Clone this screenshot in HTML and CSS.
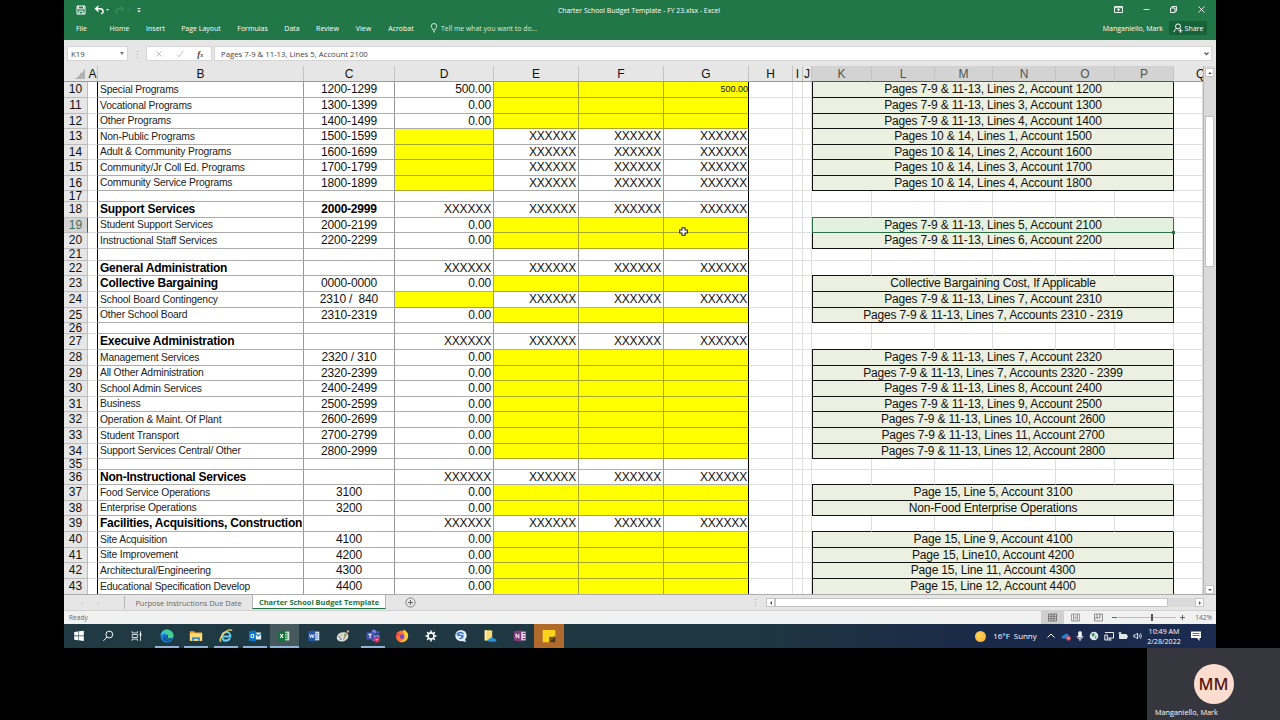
FILE: index.html
```
<!DOCTYPE html>
<html lang="en">
<head>
    <meta charset="UTF-8">
    <title>Charter School Budget Template - FY 23.xlsx - Excel</title>
    <link rel="stylesheet" href="styles.css">
</head>
<body>
    <div class="desktop">
        <header class="ribbon">
            <div class="title-bar">
                <div class="quick-access">
                    <svg width="10" height="10" viewBox="0 0 10 10"><path d="M1 1h8v8H1zM2.5 1v3h5V1M3 9V6.2h4V9" fill="none" stroke="#fff" stroke-width="1"/></svg>
                    <svg width="16" height="10" viewBox="0 0 16 10"><path d="M4.5 1L1.5 3.8l3 2.8M1.5 3.8H6c4 0 4 4.6 1 4.8" fill="none" stroke="#fff" stroke-width="1.4"/><path d="M12 4h3l-1.5 1.8z" fill="#fff"/></svg>
                    <svg class="faded" width="16" height="10" viewBox="0 0 16 10"><path d="M5.500 1l3 2.800-3 2.800M8.500 3.800H4c-4 0-4 4.600-1 4.800" fill="none" stroke="#6fae88" stroke-width="1.200"/><path d="M12 4h3l-1.500 1.800z" fill="#6fae88"/></svg>
                    <svg width="6" height="8" viewBox="0 0 6 8"><path d="M1.500 2.500h3" stroke="#fff" stroke-width="0.800"/><path d="M1.200 4.500h3.600L3 6.500z" fill="#fff"/></svg>
                </div>
                <div class="window-title">Charter School Budget Template - FY 23.xlsx - Excel</div>
                <div class="window-buttons">
                    <svg width="9" height="9" viewBox="0 0 9 9"><path d="M.5 1.500h8v6h-8zM.5 2.700h8M4.500 6.500V4M3 5l1.500-1.300L6 5" fill="none" stroke="#fff" stroke-width="0.900"/></svg>
                    <svg width="9" height="9" viewBox="0 0 9 9"><path d="M1.500 4.500h6" stroke="#fff" stroke-width="0.800"/></svg>
                    <svg width="9" height="9" viewBox="0 0 9 9"><path d="M1.500 3h4.500v4.500H1.500zM3 3V1.500h4.500V6H6" fill="none" stroke="#fff" stroke-width="0.900"/></svg>
                    <svg width="9" height="9" viewBox="0 0 9 9"><path d="M1.500 1.500l6 6M7.500 1.500l-6 6" stroke="#fff" stroke-width="0.900"/></svg>
                </div>
            </div>
            <nav class="menu">
                <span class="m-file">File</span>
                <span class="m-home">Home</span>
                <span class="m-insert">Insert</span>
                <span class="m-layout">Page Layout</span>
                <span class="m-formulas">Formulas</span>
                <span class="m-data">Data</span>
                <span class="m-review">Review</span>
                <span class="m-view">View</span>
                <span class="m-acrobat">Acrobat</span>
                <svg width="8" height="10" viewBox="0 0 8 10"><path d="M3 7C3 5.500 1.300 5 1.300 3.200a2.700 2.700 0 0 1 5.400 0C6.700 5 5 5.500 5 7zM3 8.800h2" fill="none" stroke="#e6f2ea" stroke-width="0.900"/></svg>
                <span class="m-tell">Tell me what you want to do...</span>
                <span class="m-user">Manganiello, Mark</span>
                <span class="share">
                    <svg width="10" height="10" viewBox="0 0 10 10"><circle cx="5" cy="3.400" r="2.500" fill="none" stroke="#fff"/><path d="M1 9c.3-2 1.500-3.200 3-3.500M5.500 7.700h4M7.500 5.700v4" fill="none" stroke="#fff"/></svg>
                    Share
                </span>
            </nav>
        </header>

        <div class="formula-bar">
            <div class="name-box"><span>K19</span><i class="caret"></i></div>
            <div class="dots"><i></i><i></i><i></i></div>
            <div class="formula-buttons">
                <svg width="8" height="8" viewBox="0 0 8 8"><path d="M1.500 1.500l5 5M6.500 1.500l-5 5" stroke="#c0c0c0"/></svg>
                <svg width="8" height="8" viewBox="0 0 8 8"><path d="M.8 4.500L3 6.800 7.200 1" fill="none" stroke="#c0c0c0"/></svg>
                <span class="fx">f<small>x</small></span>
            </div>
            <div class="formula-text"><span>Pages 7-9 &amp; 11-13, Lines 5, Account 2100</span><svg width="7" height="6" viewBox="0 0 7 6"><path d="M1.500 1.500l2 2.200 2-2.200" fill="none" stroke="#555" stroke-width="1.200"/></svg></div>
        </div>

        <div class="workbook">
            <div class="sheet" id="sheet">
                <div class="row column-heads">
                    <b class="corner"></b><b>A</b><b>B</b><b>C</b><b>D</b><b>E</b><b>F</b><b>G</b><b>H</b><b>I</b><b>J</b><b class="on">K</b><b class="on">L</b><b class="on">M</b><b class="on">N</b><b class="on">O</b><b class="on">P</b><b class="cut"><span>Q</span></b>
                </div>
            </div>
            <div class="v-scroll">
                <div class="arrow up"></div>
                <div class="v-track"><div class="v-thumb"></div></div>
                <div class="arrow down"></div>
            </div>
            <svg class="cursor" width="9" height="9" viewBox="0 0 9 9"><path d="M3 .7h3V3h2.300v3H6v2.300H3V6H.7V3H3z" fill="#fff" stroke="#222" stroke-width="1.100"/></svg>
        </div>

        <div class="tab-bar">
            <div class="tab-nav"><span>&#8249;</span><span>&#8250;</span></div>
            <div class="tab">Purpose Instructions Due Date</div>
            <div class="tab active">Charter School Budget Template</div>
            <svg class="add" width="11" height="11" viewBox="0 0 11 11"><circle cx="5.500" cy="5.500" r="4.600" fill="none" stroke="#777" stroke-width="0.900"/><path d="M3 5.500h5M5.500 3v5" stroke="#666"/></svg>
            <div class="dots"><i></i><i></i><i></i></div>
            <div class="h-scroll">
                <div class="arrow left"></div>
                <div class="h-thumb"></div>
                <div class="arrow right"></div>
            </div>
        </div>

        <div class="status-bar">
            <span class="ready">Ready</span>
            <div class="views">
                <span class="view on"><svg width="9" height="9" viewBox="0 0 9 9"><path d="M.5 1h8v7h-8zM.5 3.300h8M.5 5.700h8M3.200 1v7M5.800 1v7" fill="none" stroke="#666" stroke-width="0.800"/></svg></span>
                <span class="view"><svg width="9" height="9" viewBox="0 0 9 9"><path d="M.5 1h8v7h-8zM2.500 1v7M6.500 1v7M3.500 3h2M3.500 4.500h2M3.500 6h2" fill="none" stroke="#888" stroke-width="0.800"/></svg></span>
                <span class="view"><svg width="9" height="9" viewBox="0 0 9 9"><path d="M.5 1h8v7h-8zM3 1v4M6 1v4M.5 5H6" fill="none" stroke="#777" stroke-width="0.800"/></svg></span>
            </div>
            <span class="zoom-sign minus"></span>
            <div class="slider"><i></i></div>
            <span class="zoom-sign plus"></span>
            <span class="percent">142%</span>
        </div>

        <div class="taskbar">
            <div class="apps">
                <span><svg viewBox="0 0 16 16"><path d="M2.500 3.500l4.600-.7v4.700H2.500zM7.700 2.700L13.500 2v5.500H7.700zM2.500 8.200h4.600v4.700l-4.600-.7zM7.700 8.200h5.800v5.500l-5.800-.8z" fill="#fff"/></svg></span>
                <span><svg viewBox="0 0 16 16"><circle cx="9.500" cy="6.300" r="3.900" fill="none" stroke="#fff" stroke-width="1.100"/><path d="M6.800 9.200L2.800 13.500" stroke="#fff" stroke-width="1.100"/></svg></span>
                <span><svg viewBox="0 0 16 16"><path d="M2.500 2.500v2h6v-2M2.500 13.500v-2h6v2M2.500 6.300h6v3.400h-6zM12 2.500v11" fill="none" stroke="#e8eef0"/><path d="M11 5h2v2.500h-2z" fill="#fff"/></svg></span>
                <span class="open"><svg viewBox="0 0 16 16"><circle cx="8" cy="8" r="7.500" fill="#1681d2"/><path d="M.7 7C1.500 2.500 5 .5 8.200.5 12 .5 15.500 4 15.500 7.500c0 2-2 3.500-4.500 3.500-1.500 0-2.500-.5-2.200-1.500C10 7.500 8 5.300 5.500 5.300 3.600 5.300 2 6 .7 7z" fill="#45cf8e"/><path d="M.7 7C2 2.500 6 1 9.500 3 6 2.800 5 5.300 5.500 5.300 3.600 5.300 2 6 .7 7z" fill="#35bce5"/><path d="M6.500 7.500c-1.500 3 1 6 5.500 5.300-2.500 2.500-7.500 1.300-8-2C3.700 9 5 7.700 6.500 7.500z" fill="#0c4f9c"/><path d="M8 7.200c2 0 1 1.500.8 2.500.2 1.500 3.700 1.800 5.700 0l-2 2.500C9 12.600 6.500 10 8 7.200z" fill="#203a43"/></svg></span>
                <span class="open"><svg viewBox="0 0 16 16"><path d="M1 2.500h5l1 1.500h8v9.500H1z" fill="#e9ab35"/><path d="M1 5h14v8.500H1z" fill="#ffdb78"/><path d="M3.500 13.500V9.500h9v4h-2.200v-2H5.700v2z" fill="#3b8bd0"/></svg></span>
                <span class="open"><svg viewBox="0 0 16 16"><path d="M12.500 10.500c-.8 1.800-2.300 2.800-4.200 2.800-2.800 0-4.800-2-4.800-4.800s2-5 4.800-5c3 0 4.700 2.200 4.700 5H4.500" fill="none" stroke="#66cdf3" stroke-width="2.400"/><path d="M2.500 14.500C-1 14 3 6.500 8 3c3-2 6.500-2.800 6.500-.8" fill="none" stroke="#f6d04c" stroke-width="1.500"/></svg></span>
                <span class="open"><svg viewBox="0 0 16 16"><path d="M8 4h7v8H8z" fill="#e9f3fb"/><path d="M8.500 5l3.200 3L15 5" fill="none" stroke="#1673c2" stroke-width="1.200"/><path d="M1 2.500L9 1.500v13l-8-1z" fill="#0b70c6"/><ellipse cx="5" cy="8" rx="1.700" ry="2" fill="none" stroke="#fff" stroke-width="1.200"/></svg></span>
                <span class="open current"><svg viewBox="0 0 16 16"><path d="M8 3h6v10H8z" fill="#e7f4ea"/><path d="M9 5h4M9 7h4M9 9h4M9 11h4M11 4v8" stroke="#2a8a50" stroke-width="0.800"/><path d="M1.500 2.500l8-1v13l-8-1z" fill="#18713b"/><path d="M3.700 5.700l3.300 4.600M7 5.700l-3.300 4.600" stroke="#fff" stroke-width="1.200"/></svg></span>
                <span><svg viewBox="0 0 16 16"><path d="M8 3h6v10H8z" fill="#eaf1fa"/><path d="M10 5h3M10 7h3M10 9h3M10 11h3" stroke="#3468ad" stroke-width="0.800"/><path d="M1.500 2.500l8-1v13l-8-1z" fill="#2858a5"/><path d="M3 6l1.100 4L5.500 6.500 6.900 10 8 6" fill="none" stroke="#fff"/></svg></span>
                <span><svg viewBox="0 0 16 16"><ellipse cx="7.500" cy="9" rx="6.800" ry="5.200" fill="#d9dcd8" transform="rotate(-20 7.500 9)"/><circle cx="4" cy="9" r="1" fill="#d55b48"/><circle cx="6.500" cy="6.700" r="1" fill="#dcb53c"/><circle cx="10" cy="6.800" r="1" fill="#4b9c57"/><circle cx="5.500" cy="11.500" r="1" fill="#477fb7"/><path d="M8.500 12l5-9" stroke="#b08859" stroke-width="1.200"/><circle cx="13.800" cy="2.800" r="1.300" fill="#e7a792"/></svg></span>
                <span class="open"><svg viewBox="0 0 16 16"><circle cx="9" cy="3" r="2.500" fill="#7b83eb"/><circle cx="13.500" cy="4" r="1.700" fill="#5059c9"/><path d="M6 6.500h9.500v4c0 5-8.500 5-9.500 1z" fill="#6d76db"/><path d="M.5 3.700h8.500v8.500H.5z" fill="#444fb3"/><path d="M2.700 6h4M4.700 6v4.500" stroke="#fff" stroke-width="1.200"/><circle cx="12.500" cy="12.300" r="3.200" fill="#cf2c57"/><path d="M11 12.300h3" stroke="#fff"/></svg></span>
                <span><svg viewBox="0 0 16 16"><circle cx="8" cy="8.500" r="6.800" fill="#ff7530"/><path d="M10 .5c4.500 2.500 6.500 6.500 4 10.500-1.500 2.500-5.500 4.500-9 3 4 0 6.500-2.500 6-5.500C10.500 6 9 4 10 .5z" fill="#ffcc3d"/><path d="M2.300 3.500l1.500 2L6 4.500l-1 2.700L1.500 9c-.5-2 .3-4 .8-5.500z" fill="#f93f5c"/><circle cx="8" cy="8.700" r="2.600" fill="#7645ce"/></svg></span>
                <span><svg viewBox="0 0 16 16"><circle cx="8" cy="8" r="3.500" fill="none" stroke="#fff" stroke-width="1.900"/><path d="M8 1.800v2.500M8 11.700v2.500M1.800 8h2.500M11.700 8h2.500M3.600 3.600l1.800 1.800M10.600 10.600l1.800 1.800M12.400 3.600l-1.800 1.800M5.400 10.600l-1.800 1.800" stroke="#fff" stroke-width="1.700"/></svg></span>
                <span><svg viewBox="0 0 16 16"><circle cx="8" cy="7.500" r="6.500" fill="#e3efff"/><path d="M6 13l6-1.500 2 3.300z" fill="#e3efff"/><path d="M3 6.500c2-3 6-3.500 8-.5M4 8c2-2 5-1 5 1M6 10.500c3 1 5-1 4-3.500" fill="none" stroke="#356eb8" stroke-width="1.500"/></svg></span>
                <span><svg viewBox="0 0 16 16"><path d="M2 1.500h7.500l1 1V13H2z" fill="#f5da75"/><path d="M2 1.500h2V13H2z" fill="#fff0ae"/><path d="M7.500 14.500c-2.500 0-2-3.500.4-3.200.6-2.700 4.200-2.400 4.600 0 3.500-.3 3.500 3.200 1.300 3.200z" fill="#2491d9"/></svg></span>
                <span><svg viewBox="0 0 16 16"><path d="M8 3h6.500v10H8z" fill="#efe2f1"/><path d="M11 5h3.500M11 8h3.500M11 11h3.500" stroke="#80397b" stroke-width="1.200"/><path d="M1 2.500l8.500-1v13L1 13.500z" fill="#80397b"/><path d="M3.500 10.500v-5l3.200 5v-5" fill="none" stroke="#fff" stroke-width="1.100"/></svg></span>
                <span class="sticky"><svg viewBox="0 0 16 16"><path d="M.8 1h14.400v8L10 15H.8z" fill="#ffd21f"/><path d="M15.200 8.500V15H8.500V9z" fill="#4b3621"/><path d="M8.500 9h6.200L8.500 15z" fill="#7a5a1c"/></svg></span>
            </div>
            <div class="tray">
                <i class="sun"></i>
                <span class="weather">16°F&nbsp; Sunny</span>
                <svg viewBox="0 0 10 10"><path d="M1.500 6.500L5 3l3.500 3.500" fill="none" stroke="#fff"/></svg>
                <svg viewBox="0 0 10 10"><path d="M1.500 7.500C-.5 6 1.500 4 3 4.500 4 2 7.500 2 8 5v2.500z" fill="#2585d5"/><circle cx="7.500" cy="7.300" r="2.400" fill="#dc3d4c"/><path d="M6.500 6.300l2 2M8.500 6.300l-2 2" stroke="#fff" stroke-width="0.700"/></svg>
                <svg viewBox="0 0 10 10"><rect x="3.200" y=".2" width="3.600" height="6.500" rx="1.500" fill="#fff"/><path d="M2 5c.5 4 5.500 4 6 0M5 8v2" fill="none" stroke="#fff" stroke-width="0.900"/></svg>
                <svg viewBox="0 0 10 10"><circle cx="5" cy="5" r="4.300" fill="#dce7e9"/><path d="M2 3l3-1 1 2-2 2zM6 5l2 1-2 2z" fill="#43966b"/></svg>
                <svg viewBox="0 0 10 10"><path d="M1 1.500h8.500V7H4M3.500 9h4M6 7v2M.8 4h2.500v5H.8z" fill="none" stroke="#fff" stroke-width="0.900"/></svg>
                <svg viewBox="0 0 10 10"><path d="M1.500 3.500h7v4h-7z" fill="#dce6ef" stroke="#fff" stroke-width="0.800"/><path d="M9.300 4.500v2M.5 2h3M2 1v3" stroke="#fff" stroke-width="0.900"/></svg>
                <svg viewBox="0 0 10 10"><path d="M.8 4h1.700l2-2v6l-2-2H.8zM6 3.500q1 1.500 0 3M7.500 2.300q1.800 2.700 0 5.400" fill="none" stroke="#fff" stroke-width="0.800"/></svg>
                <div class="clock">10:49 AM<br>2/28/2022</div>
                <svg class="notice" viewBox="0 0 10 10"><path d="M0 .5h10V7H8.500v3L6 7H0z" fill="#fff"/><path d="M1.500 2.500h7M1.500 4.500h7" stroke="#3c4b65" stroke-width="0.800"/></svg>
            </div>
        </div>
    </div>

    <div class="participant">
        <div class="avatar">MM</div>
        <div class="participant-name">Manganiello, Mark</div>
    </div>

    <script>
        // [row, height, label, code, D, E-G, reference, style]
        // y = yellow input cell, x = XXXXXX
        const rows = [
            [10, 16, 'Special Programs', '1200-1299', '500.00', 'y', 'Pages 7-9 & 11-13, Lines 2, Account 1200'],
            [11, 16, 'Vocational Programs', '1300-1399', '0.00', 'y', 'Pages 7-9 & 11-13, Lines 3, Account 1300'],
            [12, 15, 'Other Programs', '1400-1499', '0.00', 'y', 'Pages 7-9 & 11-13, Lines 4, Account 1400'],
            [13, 16, 'Non-Public Programs', '1500-1599', 'y', 'x', 'Pages 10 & 14, Lines 1, Account 1500'],
            [14, 15, 'Adult & Community Programs', '1600-1699', 'y', 'x', 'Pages 10 & 14, Lines 2, Account 1600'],
            [15, 16, 'Community/Jr Coll Ed. Programs', '1700-1799', 'y', 'x', 'Pages 10 & 14, Lines 3, Account 1700'],
            [16, 15, 'Community Service Programs', '1800-1899', 'y', 'x', 'Pages 10 & 14, Lines 4, Account 1800'],
            [17, 11, '', '', '', '', ''],
            [18, 16, 'Support Services', '2000-2999', 'x', 'x', '', 'bold'],
            [19, 15, 'Student Support Services', '2000-2199', '0.00', 'y', 'Pages 7-9 & 11-13, Lines 5, Account 2100', 'selected'],
            [20, 16, 'Instructional Staff Services', '2200-2299', '0.00', 'y', 'Pages 7-9 & 11-13, Lines 6, Account 2200'],
            [21, 12, '', '', '', '', ''],
            [22, 15, 'General Administration', '', 'x', 'x', '', 'bold'],
            [23, 16, 'Collective Bargaining', '0000-0000', '0.00', 'y', 'Collective Bargaining Cost, If Applicable', 'bold-label'],
            [24, 16, 'School Board Contingency', '2310 /  840', 'y', 'x', 'Pages 7-9 & 11-13, Lines 7, Account 2310'],
            [25, 15, 'Other School Board', '2310-2319', '0.00', 'y', 'Pages 7-9 & 11-13, Lines 7, Accounts 2310 - 2319'],
            [26, 11, '', '', '', '', ''],
            [27, 16, 'Execuive Administration', '', 'x', 'x', '', 'bold'],
            [28, 16, 'Management Services', '2320 / 310', '0.00', 'y', 'Pages 7-9 & 11-13, Lines 7, Account 2320'],
            [29, 15, 'All Other Administration', '2320-2399', '0.00', 'y', 'Pages 7-9 & 11-13, Lines 7, Accounts 2320 - 2399'],
            [30, 16, 'School Admin Services', '2400-2499', '0.00', 'y', 'Pages 7-9 & 11-13, Lines 8, Account 2400'],
            [31, 15, 'Business', '2500-2599', '0.00', 'y', 'Pages 7-9 & 11-13, Lines 9, Account 2500'],
            [32, 16, 'Operation & Maint. Of Plant', '2600-2699', '0.00', 'y', 'Pages 7-9 & 11-13, Lines 10, Account 2600'],
            [33, 16, 'Student Transport', '2700-2799', '0.00', 'y', 'Pages 7-9 & 11-13, Lines 11, Account 2700'],
            [34, 15, 'Support Services Central/ Other', '2800-2999', '0.00', 'y', 'Pages 7-9 & 11-13, Lines 12, Account 2800'],
            [35, 11, '', '', '', '', ''],
            [36, 15, 'Non-Instructional Services', '', 'x', 'x', '', 'bold'],
            [37, 16, 'Food Service Operations', '3100', '0.00', 'y', 'Page 15, Line 5, Account 3100'],
            [38, 15, 'Enterprise Operations', '3200', '0.00', 'y', 'Non-Food Enterprise Operations'],
            [39, 16, 'Facilities, Acquisitions, Construction', '', 'x', 'x', '', 'bold'],
            [40, 16, 'Site Acquisition', '4100', '0.00', 'y', 'Page 15, Line 9, Account 4100'],
            [41, 15, 'Site Improvement', '4200', '0.00', 'y', 'Page 15, Line10, Account 4200'],
            [42, 16, 'Architectural/Engineering', '4300', '0.00', 'y', 'Page 15, Line 11, Account 4300'],
            [43, 16, 'Educational Specification Develop', '4400', '0.00', 'y', 'Page 15, Line 12, Account 4400']
        ];

        function cell(text, cls) {
            const div = document.createElement('div');
            div.className = 'cell ' + (cls || '');
            div.textContent = text;
            return div;
        }

        function amount(value, cls) {
            if (value === 'y') return cell('', 'amount yellow ' + cls);
            return cell(value === 'x' ? 'XXXXXX' : value, 'amount ' + cls);
        }

        const sheet = document.getElementById('sheet');
        rows.forEach(function(data, index) {
            const [number, height, label, code, d, efg, ref, style] = data;
            const next = rows[index + 1];
            const row = document.createElement('div');
            row.className = 'row ' + (style || '');
            row.style.height = height + 'px';
            row.append(cell(number, 'number'), cell('', 'col-a'), cell(label, 'label'), cell(code, 'code'));
            row.append(amount(d, ''), amount(efg, ''), amount(efg, ''), amount(efg, 'last'));
            if (number === 10) {
                row.children[7].textContent = '500.00';
                row.children[7].classList.add('small');
            }
            row.append(cell('', 'light'), cell('', 'light'), cell('', 'light'));
            if (ref) {
                row.append(cell(ref, 'ref'));
            } else {
                // the empty row above a block carries its top border
                const edge = next && next[6] ? (next[7] === 'selected' ? ' green-edge' : ' edge') : '';
                for (let i = 0; i < 6; i++) row.append(cell('', 'light' + edge));
            }
            row.append(cell('', 'light'));
            sheet.append(row);
        });
    </script>
</body>
</html>
```
FILE: styles.css
```
* {
    box-sizing: border-box;
}

body {
    margin: 0;
    width: 1280px;
    height: 720px;
    overflow: hidden;
    background: #000;
    font-family: "Open Sans", sans-serif;
}

svg {
    display: block;
    flex: none;
}

.desktop {
    width: 1152px;
    height: 648px;
    margin-left: 64px;
    background: #e6e6e6;
}

/* ribbon */
.ribbon {
    height: 40px;
    background: #217748;
    color: #fff;
    font-size: 7px;
}

.title-bar {
    display: flex;
    align-items: center;
    height: 19px;
}

.quick-access {
    display: flex;
    align-items: center;
    gap: 5px;
    width: 480px;
    padding-left: 12px;
}

.quick-access svg:nth-child(2) {
    margin-left: 3px;
}

.quick-access .faded {
    opacity: 0.35;
}

.window-title {
    width: 190px;
    text-align: center;
    white-space: nowrap;
    font-size: 6.850px;
    padding-top: 1px;
}

.window-buttons {
    display: flex;
    gap: 18.700px;
    margin-left: auto;
    padding-right: 10px;
}

.menu {
    display: flex;
    align-items: center;
    height: 18px;
    white-space: nowrap;
}

.menu > span {
    text-align: center;
    flex: none;
}

.m-file { width: 35px; }
.m-home { width: 41px; }
.m-insert { width: 31px; }
.m-layout { width: 60px; }
.m-formulas { width: 43px; }
.m-data { width: 36px; }
.m-review { width: 35px; }
.m-view { width: 37px; }
.m-acrobat { width: 38px; }

.menu svg {
    margin-left: 10px;
}

.menu .m-tell {
    margin-left: 3px;
    font-size: 6.900px;
    color: #d6eadd;
}

.menu .m-user {
    margin-left: auto;
    margin-right: 6px;
}

.menu .share {
    display: flex;
    align-items: center;
    justify-content: center;
    gap: 2px;
    width: 38px;
    height: 14px;
    margin-right: 9px;
    background: #176239;
}

.share svg {
    margin: 0;
}

/* formula bar */
.formula-bar {
    display: flex;
    height: 26px;
    padding: 6px 4px 4px 3px;
    font-size: 7.750px;
    color: #444;
}

.name-box,
.formula-buttons,
.formula-text {
    display: flex;
    align-items: center;
    height: 15px;
    background: #fff;
    border: 1px solid #d5d5d5;
}

.name-box {
    justify-content: space-between;
    width: 61px;
    padding: 0 3px;
}

.caret {
    border: 2px solid transparent;
    border-top: 3px solid #777;
    border-bottom: 0;
}

.dots {
    display: flex;
    flex-direction: column;
    justify-content: center;
    gap: 2px;
    width: 18px;
    padding-left: 9px;
}

.dots i {
    width: 1px;
    height: 1px;
    background: #aaa;
}

.formula-buttons {
    justify-content: space-around;
    width: 66px;
    padding: 0 1px;
}

.fx {
    font-family: "Liberation Serif", serif;
    font-style: italic;
    font-weight: bold;
    font-size: 9px;
}

.fx small {
    font-size: 6px;
}

.formula-text {
    flex: 1;
    justify-content: space-between;
    margin-left: 2px;
    padding: 0 1px 0 6px;
}

/* worksheet */
.workbook {
    position: relative;
    display: flex;
    height: 528px;
    overflow: hidden;
}

.sheet {
    width: 1139px;
    background: #fff;
    font-family: "Liberation Sans", Arial, sans-serif;
    font-size: 12px;
    color: #111;
}

.row {
    display: grid;
    grid-template-columns: 24px 10px 206px 91px 99px 85px 85px 85px 44px 10px 9px 60px 63px 58px 63px 59px 59px 29px;
}

.column-heads {
    height: 16px;
    background: #e6e6e6;
    border-bottom: 1px solid #9c9c9c;
    line-height: 17px;
    text-align: center;
}

.column-heads b {
    height: 15px;
    font-weight: normal;
    border-right: 1px solid #c4c4c4;
}

.column-heads .on {
    height: 16px;
    background: #d3d3d3;
    color: #4b5750;
    border-bottom: 1px solid #217346;
}

.column-heads .cut {
    overflow: hidden;
    padding-left: 22px;
    text-align: left;
    border-right: 0;
}

.column-heads .corner {
    border-right: 0;
    background: linear-gradient(135deg, transparent 50%, #b3b3b3 50%) no-repeat 11px 3px / 10px 10px;
}

.cell {
    display: flex;
    align-items: center;
    min-width: 0;
    line-height: 11px;
    letter-spacing: -0.160px;
    white-space: pre;
    border-right: 1px solid #999;
    border-bottom: 1px solid #adadad;
}

.number {
    justify-content: center;
    overflow: hidden;
    background: #e6e6e6;
    border-color: #bcbcbc;
    letter-spacing: 0;
}

.selected .number {
    background: #d3d3d3;
    color: #45705a;
    border-right-color: #217346;
}

.col-a {
    border-right-color: #000;
    border-bottom-color: #ddd;
}

.label {
    padding-left: 2px;
    padding-bottom: 1px;
    font-size: 10.300px;
    letter-spacing: -0.170px;
    color: #222;
}

.code {
    justify-content: center;
}

.amount {
    justify-content: flex-end;
    padding-right: 2px;
}

.bold .label,
.bold .code,
.bold-label .label {
    padding-bottom: 0;
    font-weight: bold;
    font-size: 12px;
    letter-spacing: -0.230px;
    color: #000;
}

.yellow {
    background: #ff0;
    border-color: #a8a82a;
}

.last {
    border-right-color: #000;
    padding-right: 1px;
}

.small {
    font-size: 9px;
    letter-spacing: 0;
    padding-right: 0;
}

.light {
    border-color: #dedede;
}

.ref {
    grid-column: span 6;
    justify-content: center;
    background: #ebf0e0;
    border: 1px solid #111;
    border-top: 0;
}

.edge {
    border-bottom-color: #111;
}

.green-edge {
    border-bottom-color: #217346;
}

.selected .ref {
    position: relative;
    background: #e5f1df;
    border-color: #2c7048;
}

.selected .ref::after {
    content: "";
    position: absolute;
    right: -2px;
    bottom: -2px;
    width: 3px;
    height: 3px;
    background: #217346;
}

.cursor {
    position: absolute;
    left: 615px;
    top: 161px;
}

/* scroll bars */
.v-scroll {
    width: 13px;
    padding: 2px 2px 0 1px;
    border-left: 1px solid #b5b5b5;
    background: #dadada;
}

.arrow {
    display: flex;
    align-items: center;
    justify-content: center;
    width: 9px;
    height: 9px;
    background: #fff;
    border: 1px solid #c4c4c4;
}

.arrow::after {
    content: "";
    border: 2px solid transparent;
}

.up::after { border-top: 0; border-bottom-color: #555; }
.down::after { border-bottom: 0; border-top-color: #555; }
.left::after { border-left: 0; border-right-color: #555; }
.right::after { border-right: 0; border-left-color: #555; }

.v-track {
    height: 508px;
    padding-top: 39px;
}

.v-thumb {
    width: 9px;
    height: 151px;
    background: #fff;
    border: 1px solid #c0c0c0;
}

/* sheet tabs */
.tab-bar {
    display: flex;
    height: 17px;
    border-top: 1px solid #ababab;
    border-bottom: 1px solid #d0d0d0;
    font-size: 7.450px;
    line-height: 14px;
    color: #666;
    white-space: nowrap;
}

.tab-nav {
    display: flex;
    gap: 14px;
    width: 60px;
    padding-left: 17px;
    color: #bbb;
}

.tab {
    width: 128px;
    margin-top: 1px;
    border-left: 1px solid #b5b5b5;
    text-align: center;
    height: 13px;
}

.tab.active {
    width: 134px;
    height: 14px;
    margin-top: 0;
    background: #fff;
    border-right: 1px solid #b5b5b5;
    border-bottom: 1px solid #217346;
    color: #217346;
    font-weight: bold;
}

.add {
    margin: 2px 0 0 19px;
}

.tab-bar .dots {
    margin-left: 339px;
    width: 11px;
    padding-left: 0;
}

.h-scroll {
    display: flex;
    width: 438px;
    height: 9px;
    margin-top: 3px;
    background: #dadada;
}

.h-thumb {
    width: 393px;
    background: #fff;
    border: 1px solid #c4c4c4;
}

.h-scroll .right {
    margin-left: auto;
}

/* status bar */
.status-bar {
    display: flex;
    align-items: center;
    height: 13px;
    background: #f1f1f1;
    color: #666;
    font-size: 6.600px;
}

.ready {
    padding-left: 5px;
}

.views {
    display: flex;
    margin-left: auto;
}

.view {
    display: flex;
    align-items: center;
    justify-content: center;
    width: 23px;
    height: 13px;
}

.view.on {
    background: #cfcfcf;
}

.zoom-sign {
    position: relative;
    width: 5px;
    height: 1px;
    background: #666;
}

.minus {
    margin-left: 2px;
}

.plus::after {
    content: "";
    position: absolute;
    left: 2px;
    top: -2px;
    width: 1px;
    height: 5px;
    background: #666;
}

.slider {
    display: flex;
    align-items: center;
    width: 58px;
    height: 1px;
    margin: 0 4px 0 1px;
    padding-left: 33px;
    background: #bbb;
}

.slider i {
    width: 2px;
    height: 7px;
    background: #555;
}

.percent {
    width: 31px;
    padding-right: 4px;
    text-align: right;
}

/* taskbar */
.taskbar {
    display: flex;
    justify-content: space-between;
    height: 24px;
    background: linear-gradient(90deg, #203a43, #1e3641 60%, #1a2849 82%, #1b2c50);
    color: #fff;
}

.apps {
    display: flex;
}

.apps span {
    display: flex;
    align-items: center;
    justify-content: center;
    width: 29.400px;
    height: 24px;
}

.apps svg {
    width: 14px;
    height: 14px;
}

.apps .open {
    background: linear-gradient(#8fb4d8, #8fb4d8) no-repeat center bottom / 24px 2px;
}

.apps .current {
    background-color: #46595f;
    background-size: 100% 2px;
}

.apps .sticky {
    background: #b06a2b;
}

.tray {
    display: flex;
    align-items: center;
    font-size: 7.900px;
    white-space: nowrap;
}

.tray svg {
    width: 10px;
    height: 10px;
    margin-right: 4.400px;
}

.sun {
    width: 11px;
    height: 11px;
    border-radius: 50%;
    background: radial-gradient(circle at 40% 40%, #ffd75c, #f7a827);
    margin-right: 7px;
}

.weather {
    width: 53px;
}

.clock {
    width: 34px;
    margin-left: 0;
    font-size: 7.100px;
    line-height: 10px;
    text-align: center;
}

.tray .notice {
    margin: 0 15px 0 10px;
}

/* meeting participant */
.participant {
    display: flex;
    flex-direction: column;
    align-items: center;
    width: 133px;
    height: 72px;
    margin-left: 1147px;
    padding-top: 16px;
    background: #36373e;
    color: #fff;
}

.avatar {
    width: 40px;
    height: 40px;
    border-radius: 50%;
    background: #fbddd0;
    color: #581b12;
    font-size: 16.300px;
    font-weight: 600;
    line-height: 40px;
    text-align: center;
}

.participant-name {
    align-self: flex-start;
    margin-left: 8px;
    font-size: 7.300px;
    line-height: 16px;
}
```
